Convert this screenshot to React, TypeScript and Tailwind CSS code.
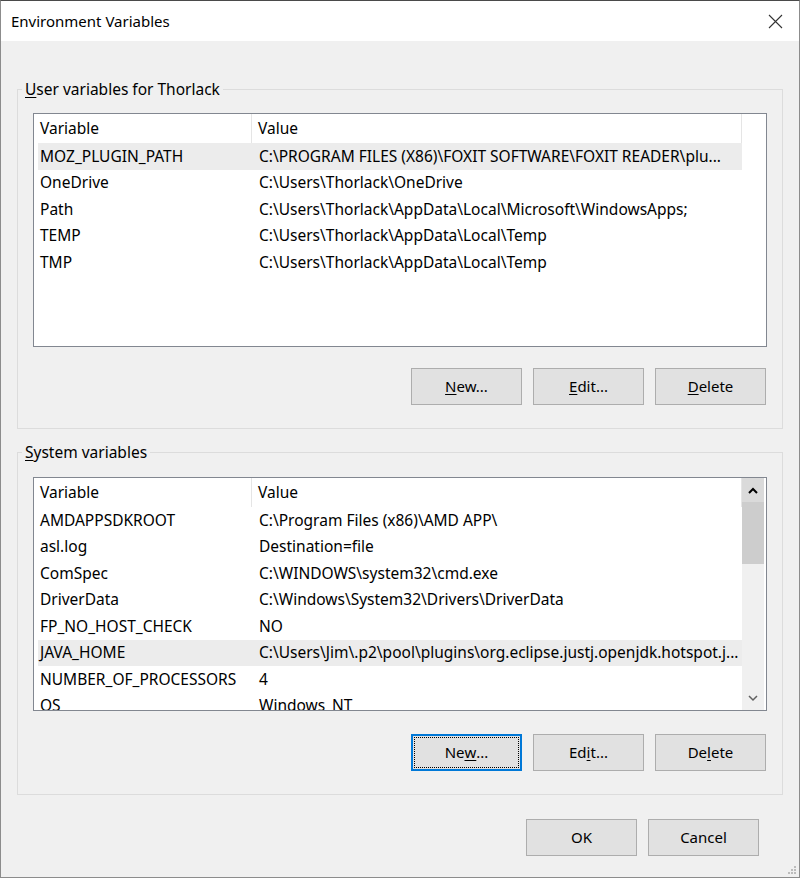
import React from "react";

type Row = { name: string; value: string; selected?: boolean };

const userRows: Row[] = [
  { name: "MOZ_PLUGIN_PATH", value: "C:\\PROGRAM FILES (X86)\\FOXIT SOFTWARE\\FOXIT READER\\plu...", selected: true },
  { name: "OneDrive", value: "C:\\Users\\Thorlack\\OneDrive" },
  { name: "Path", value: "C:\\Users\\Thorlack\\AppData\\Local\\Microsoft\\WindowsApps;" },
  { name: "TEMP", value: "C:\\Users\\Thorlack\\AppData\\Local\\Temp" },
  { name: "TMP", value: "C:\\Users\\Thorlack\\AppData\\Local\\Temp" },
];

const systemRows: Row[] = [
  { name: "AMDAPPSDKROOT", value: "C:\\Program Files (x86)\\AMD APP\\" },
  { name: "asl.log", value: "Destination=file" },
  { name: "ComSpec", value: "C:\\WINDOWS\\system32\\cmd.exe" },
  { name: "DriverData", value: "C:\\Windows\\System32\\Drivers\\DriverData" },
  { name: "FP_NO_HOST_CHECK", value: "NO" },
  { name: "JAVA_HOME", value: "C:\\Users\\Jim\\.p2\\pool\\plugins\\org.eclipse.justj.openjdk.hotspot.j...", selected: true },
  { name: "NUMBER_OF_PROCESSORS", value: "4" },
  { name: "OS", value: "Windows_NT" },
];

// label with one underlined access key
const Key = ({ text, at }: { text: string; at: number }) => (
  <>
    {text.slice(0, at)}
    <span className="underline underline-offset-2">{text[at]}</span>
    {text.slice(at + 1)}
  </>
);

const Btn = ({ children, focused }: { children: React.ReactNode; focused?: boolean }) => (
  <button
    className={
      focused
        ? "w-[111px] h-[37px] bg-[#e1e1e1] border-2 border-[#0078d7] p-[1px] text-[15px] text-black"
        : "w-[111px] h-[37px] bg-[#e1e1e1] border border-[#adadad] text-[15px] text-black"
    }
  >
    {focused ? (
      <div className="w-full h-full border border-dotted border-black flex items-center justify-center">{children}</div>
    ) : (
      children
    )}
  </button>
);

const VarList = ({ rows, scroll }: { rows: Row[]; scroll?: boolean }) => (
  <div className="h-[234px] bg-white border border-[#828790] flex overflow-hidden">
    <div className="w-[708px] flex flex-col">
      <div className="h-[29px] shrink-0 flex items-center border-r border-[#e5e5e5]">
        <div className="w-[218px] h-full pl-[6px] flex items-center border-r border-[#e5e5e5]">Variable</div>
        <div className="pl-[6px]">Value</div>
      </div>
      {rows.map((r) => (
        <div
          key={r.name}
          className={
            r.selected
              ? "h-[26.5px] shrink-0 ml-[4px] flex items-center bg-[#ececec]"
              : "h-[26.5px] shrink-0 ml-[4px] flex items-center"
          }
        >
          <div className="w-[214px] pl-[2px] whitespace-nowrap">{r.name}</div>
          <div className="pl-[7px] whitespace-nowrap">{r.value}</div>
        </div>
      ))}
    </div>
    {scroll ? (
      <div className="w-[22px] h-full bg-[#f0f0f0] flex flex-col">
        <div className="h-[24px] bg-[#dadada] flex items-center justify-center">
          <svg width="10" height="7" viewBox="0 0 10 7">
            <path d="M1 6 L5 2 L9 6" fill="none" stroke="#000" strokeWidth="2" />
          </svg>
        </div>
        <div className="h-[62px] bg-[#cdcdcd]" />
        <div className="flex-1" />
        <div className="h-[24px] flex items-center justify-center">
          <svg width="10" height="7" viewBox="0 0 10 7">
            <path d="M1 1 L5 5 L9 1" fill="none" stroke="#606060" strokeWidth="1.5" />
          </svg>
        </div>
      </div>
    ) : null}
  </div>
);

const Group = ({ legend, children }: { legend: React.ReactNode; children: React.ReactNode }) => (
  <fieldset className="border border-[#dcdcdc] px-[15px] pb-[23px]">
    <legend className="ml-[-11px] px-[3px] leading-[20px]">{legend}</legend>
    {children}
  </fieldset>
);

export default function App() {
  return (
    <div
      className="w-[800px] h-[878px] bg-[#f0f0f0] border-x border-b border-t border-x-[#8c8c8c] border-b-[#8c8c8c] border-t-[#4a4a4a] flex flex-col text-[15.5px] text-black"
      style={{ fontFamily: '"Segoe UI", "Noto Sans", sans-serif' }}
    >
      <div className="h-[40px] bg-white flex items-center justify-between pl-[10px] pr-[16px] shrink-0">
        <span className="text-[15px]">Environment Variables</span>
        <svg width="15" height="15" viewBox="0 0 15 15">
          <path d="M1 1 L14 14 M14 1 L1 14" stroke="#333" strokeWidth="1.1" />
        </svg>
      </div>

      <div className="px-[16px] pt-[38px] flex flex-col">
        <Group legend={<Key text="User variables for Thorlack" at={0} />}>
          <div className="mt-[14px]">
            <VarList rows={userRows} />
          </div>
          <div className="mt-[21px] flex justify-end gap-[11px] pr-[1px]">
            <Btn><Key text="New..." at={0} /></Btn>
            <Btn><Key text="Edit..." at={0} /></Btn>
            <Btn><Key text="Delete" at={0} /></Btn>
          </div>
        </Group>

        <div className="mt-[13px]">
          <Group legend={<Key text="System variables" at={0} />}>
            <div className="mt-[15px]">
              <VarList rows={systemRows} scroll />
            </div>
            <div className="mt-[23px] flex justify-end gap-[11px] pr-[1px]">
              <Btn focused><Key text="New..." at={2} /></Btn>
              <Btn><Key text="Edit..." at={2} /></Btn>
              <Btn><Key text="Delete" at={2} /></Btn>
            </div>
          </Group>
        </div>

        <div className="mt-[24px] pr-[24px] flex justify-end gap-[11px]">
          <Btn>OK</Btn>
          <Btn>Cancel</Btn>
        </div>
      </div>

      <div className="flex-1 flex items-end justify-end pr-[2px] pb-[2px]">
        <svg width="10" height="10" viewBox="0 0 10 10">
          <rect x="7" y="1" width="2" height="2" fill="#bcbcbc" />
          <rect x="4" y="4" width="2" height="2" fill="#bcbcbc" />
          <rect x="7" y="4" width="2" height="2" fill="#bcbcbc" />
          <rect x="1" y="7" width="2" height="2" fill="#bcbcbc" />
          <rect x="4" y="7" width="2" height="2" fill="#bcbcbc" />
          <rect x="7" y="7" width="2" height="2" fill="#bcbcbc" />
        </svg>
      </div>
    </div>
  );
}
